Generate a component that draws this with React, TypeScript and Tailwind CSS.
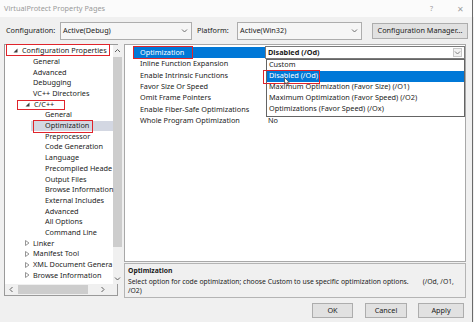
import React from "react";

type TreeItem = { t: string; pad: string; tri?: "exp" | "col"; red?: string; sel?: boolean };

const tree: TreeItem[] = [
  { t: "Configuration Properties", pad: "pl-[6px]", tri: "exp", red: "left-[1px] w-[104px] top-[-1.5px] bottom-[0px]" },
  { t: "General", pad: "pl-[28px]" },
  { t: "Advanced", pad: "pl-[28px]" },
  { t: "Debugging", pad: "pl-[28px]" },
  { t: "VC++ Directories", pad: "pl-[28px]" },
  { t: "C/C++", pad: "pl-[18px]", tri: "exp", red: "left-[12px] w-[48px] top-[0.5px] bottom-[0px]" },
  { t: "General", pad: "pl-[40px]" },
  { t: "Optimization", pad: "pl-[40px]", sel: true, red: "left-[28px] w-[60px] top-[0px] bottom-[-1.5px]" },
  { t: "Preprocessor", pad: "pl-[40px]" },
  { t: "Code Generation", pad: "pl-[40px]" },
  { t: "Language", pad: "pl-[40px]" },
  { t: "Precompiled Heade", pad: "pl-[40px]" },
  { t: "Output Files", pad: "pl-[40px]" },
  { t: "Browse Information", pad: "pl-[40px]" },
  { t: "External Includes", pad: "pl-[40px]" },
  { t: "Advanced", pad: "pl-[40px]" },
  { t: "All Options", pad: "pl-[40px]" },
  { t: "Command Line", pad: "pl-[40px]" },
  { t: "Linker", pad: "pl-[18px]", tri: "col" },
  { t: "Manifest Tool", pad: "pl-[18px]", tri: "col" },
  { t: "XML Document Genera", pad: "pl-[18px]", tri: "col" },
  { t: "Browse Information", pad: "pl-[18px]", tri: "col" },
];

const props: { n: string; v?: string }[] = [
  { n: "Optimization" },
  { n: "Inline Function Expansion" },
  { n: "Enable Intrinsic Functions" },
  { n: "Favor Size Or Speed" },
  { n: "Omit Frame Pointers" },
  { n: "Enable Fiber-Safe Optimizations" },
  { n: "Whole Program Optimization", v: "No" },
];

const drop = [
  "Custom",
  "Disabled (/Od)",
  "Maximum Optimization (Favor Size) (/O1)",
  "Maximum Optimization (Favor Speed) (/O2)",
  "Optimizations (Favor Speed) (/Ox)",
];

function Chevron({ dir = "down", color = "#707070" }: { dir?: "down" | "up" | "left" | "right"; color?: string }) {
  const d =
    dir === "down" ? "M1 1.5 L3.5 4 L6 1.5" : dir === "up" ? "M1 4 L3.5 1.5 L6 4" : dir === "left" ? "M4.5 1 L2 3.5 L4.5 6" : "M2.5 1 L5 3.5 L2.5 6";
  return (
    <svg width="7" height={dir === "down" || dir === "up" ? 5.5 : 7} viewBox={dir === "down" || dir === "up" ? "0 0 7 5.5" : "0 0 7 7"}>
      <path d={d} fill="none" stroke={color} strokeWidth="1" />
    </svg>
  );
}

function Tri({ kind }: { kind: "exp" | "col" }) {
  if (kind === "exp")
    return (
      <svg width="5" height="5" viewBox="0 0 5 5">
        <polygon points="4.5,0.5 4.5,4.5 0.5,4.5" fill="#3c3c3c" />
      </svg>
    );
  return (
    <svg width="5" height="6" viewBox="0 0 5 6">
      <polygon points="0.5,0.5 4,3 0.5,5.5" fill="none" stroke="#8a8a8a" strokeWidth="0.9" />
    </svg>
  );
}

export default function App() {
  return (
    <div className="w-[474px] h-[322px] overflow-hidden bg-[#f0f0f0] flex flex-col font-['Noto_Sans',sans-serif] text-[7.3px] text-[#1b1b1b] leading-none relative">
      {/* title bar */}
      <div className="h-[17px] bg-[#fbfbfb] flex items-center pl-[4px] pr-[10px] shrink-0">
        <span className="text-[#9a9a9a] text-[7.3px]">VirtualProtect Property Pages</span>
        <span className="ml-auto text-[#a0a0a0] text-[7px] mr-[24px]">?</span>
        <span className="text-[#a0a0a0] text-[8px]">✕</span>
      </div>

      {/* configuration row */}
      <div className="flex items-center mt-[5px] h-[18px] shrink-0">
        <span className="ml-[6px] w-[54px]">Configuration:</span>
        <div className="w-[132px] h-[18px] border border-[#adadad] bg-[#f6f6f6] flex items-center pl-[2px] pr-[3px]">
          <span>Active(Debug)</span>
          <span className="ml-auto">
            <Chevron />
          </span>
        </div>
        <span className="ml-[5px] w-[40px]">Platform:</span>
        <div className="w-[125px] h-[18px] border border-[#adadad] bg-[#f6f6f6] flex items-center pl-[2px] pr-[3px]">
          <span>Active(Win32)</span>
          <span className="ml-auto">
            <Chevron />
          </span>
        </div>
        <div className="ml-[10px] w-[96px] h-[16px] border border-[#adadad] bg-[#e1e1e1] flex items-center justify-center">
          Configuration Manager...
        </div>
      </div>

      {/* main area */}
      <div className="flex mt-[4px] h-[254px] shrink-0">
        {/* tree */}
        <div className="ml-[4px] w-[114px] h-[252px] border border-[#9a9a9a] bg-white flex flex-col">
          <div className="flex flex-1 min-h-0">
            <div className="flex-1 pt-[0.6px] relative">
              {tree.map((it, i) => (
                <div key={i} className={`h-[10.7px] flex items-center relative ${it.pad}`}>
                  {it.sel && <div className="absolute left-[26px] right-[0px] top-[1px] bottom-[0px] bg-[#d3d7e2]" />}
                  {it.tri && (
                    <span className={`flex items-center relative ${it.tri === "exp" ? "w-[11px] pl-[2px]" : "w-[10px] pl-[2px]"}`}>
                      <Tri kind={it.tri} />
                    </span>
                  )}
                  <span className="relative whitespace-nowrap">{it.t}</span>
                  {it.red && <div className={`absolute z-10 border-[1.5px] border-[#e0242b] ${it.red}`} />}
                </div>
              ))}
            </div>
            <div className="w-[9px] bg-[#f0f0f0] flex flex-col items-center">
              <div className="h-[12px] flex items-center justify-center">
                <Chevron dir="up" color="#606060" />
              </div>
              <div className="w-[9px] h-[190px] bg-[#cdcdcd]" />
              <div className="flex-1" />
              <div className="h-[10px] flex items-center justify-center">
                <Chevron dir="down" color="#606060" />
              </div>
            </div>
          </div>
          <div className="h-[11px] flex shrink-0">
            <div className="flex-1 bg-[#f0f0f0] flex items-center">
              <div className="w-[12px] flex items-center justify-center">
                <Chevron dir="left" color="#606060" />
              </div>
              <div className="w-[70px] h-[9px] bg-[#cdcdcd] ml-[1px]" />
              <div className="flex-1" />
              <div className="w-[12px] flex items-center justify-center">
                <Chevron dir="right" color="#606060" />
              </div>
            </div>
            <div className="w-[9px] bg-[#f0f0f0]" />
          </div>
        </div>

        {/* right column */}
        <div className="ml-[6px] w-[342px] flex flex-col">
          <div className="h-[218px] border border-[#a8a8a8] bg-white relative pt-[2.2px]">
            {props.map((p, i) => (
              <div key={i} className="h-[11.3px] flex items-center">
                <div className="w-[8px]" />
                <div className={`w-[132px] h-full flex items-center pl-[7px] relative whitespace-nowrap ${i === 0 ? "bg-[#0078d7] text-white" : ""}`}>
                  {p.n}
                  {i === 0 && <div className="absolute z-10 left-[0px] w-[60px] top-[-1.5px] bottom-[-0.5px] border-[1.5px] border-[#e0242b]" />}
                </div>
                <div className="flex-1 h-full flex items-center">
                  {i === 0 ? (
                    <div className="w-[200px] h-[13px] border border-[#7a7a7a] bg-white flex items-center pl-[2px] pr-[2px]">
                      <span className="font-bold">Disabled (/Od)</span>
                      <span className="ml-auto w-[9px] h-[9px] border border-[#c8c8c8] bg-[#f2f2f2] flex items-center justify-center">
                        <Chevron color="#808080" />
                      </span>
                    </div>
                  ) : (
                    <span className="pl-[3px]">{p.v ?? ""}</span>
                  )}
                </div>
              </div>
            ))}

            {/* dropdown list overlay */}
            <div className="absolute left-[141px] top-[13.5px] w-[199px] bg-white border border-[#646464] z-20 pb-[1px]">
              {drop.map((d, i) => (
                <div key={i} className={`h-[11px] flex items-center pl-[2px] whitespace-nowrap ${i === 1 ? "bg-[#0078d7] text-white" : ""}`}>
                  {d}
                </div>
              ))}
              <div className="absolute left-[-4px] top-[10px] w-[57px] h-[14px] border-[1.5px] border-[#e0242b]" />
              <svg className="absolute left-[17px] top-[17px]" width="6" height="9" viewBox="0 0 6 9">
                <path d="M0.5 0.5 L0.5 7 L2 5.6 L3.2 8.3 L4.2 7.9 L3.1 5.3 L5.2 5.3 Z" fill="white" stroke="#222" strokeWidth="0.6" />
              </svg>
            </div>
          </div>

          <div className="mt-[1px] h-[35px] border border-[#b4b4b4] bg-[#f0f0f0] pl-[3px] pt-[3px] flex flex-col text-[6.8px]">
            <div className="font-bold h-[9px] flex items-center">Optimization</div>
            <div className="h-[9px] mt-[2px] flex items-center whitespace-nowrap">
              <span>Select option for code optimization; choose Custom to use specific optimization options.</span>
              <span className="ml-[14px]">(/Od, /O1,</span>
            </div>
            <div className="h-[8px] flex items-center">/O2)</div>
          </div>
        </div>
      </div>

      {/* buttons */}
      <div className="flex mt-[5px] h-[15px] shrink-0">
        <div className="ml-[312px] w-[41px] h-[15px] border border-[#adadad] bg-[#e1e1e1] flex items-center justify-center">OK</div>
        <div className="ml-[12px] w-[42px] h-[15px] border border-[#adadad] bg-[#e1e1e1] flex items-center justify-center">Cancel</div>
        <div className="ml-[11px] w-[46px] h-[15px] border border-[#adadad] bg-[#e1e1e1] flex items-center justify-center">Apply</div>
      </div>

      <div className="absolute right-[1px] top-[0px] bottom-[0px] w-[1.5px] bg-[#6a6a6a]" />
    </div>
  );
}
